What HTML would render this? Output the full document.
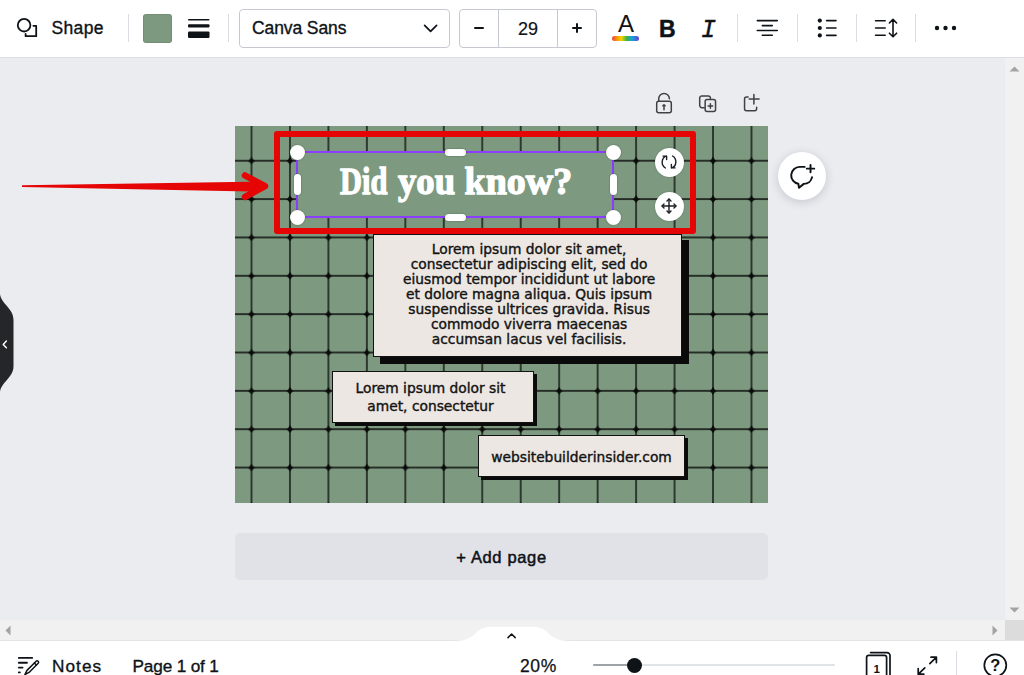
<!DOCTYPE html>
<html lang="en">
<head>
<meta charset="utf-8">
<title>Canva editor</title>
<style>
*{box-sizing:border-box;margin:0;padding:0}
html,body{width:1024px;height:675px;overflow:hidden;background:#ebecf0;font-family:"Liberation Sans",sans-serif;color:#0e1318}
.abs{position:absolute}
#toolbar{left:0;top:0;width:1024px;height:58px;background:#fff;border-bottom:1px solid #dcdfe3}
.ui{font-family:"Liberation Sans",sans-serif;color:#0e1318;white-space:nowrap;-webkit-text-stroke:0.35px #0e1318}
.vdiv{width:1px;background:#d9dce0;top:14px;height:28px}
.box{border:1px solid #c6cad0;border-radius:4px;background:#fff}
#stage{left:0;top:58px;width:1005px;height:562px;background:#ebecf0}
#vscroll{left:1005px;top:58px;width:19px;height:562px;background:#f1f1f2}
#hscroll{left:0;top:620px;width:1005px;height:21px;background:#f1f1f2}
#corner{left:1005px;top:620px;width:19px;height:21px;background:#dcdcdc}
#bottombar{left:0;top:640px;width:1024px;height:35px;background:#fff;border-top:1px solid #e3e4e8}
.tbox{-webkit-text-stroke:0.4px #141414;white-space:nowrap;background:#ece7e3;border:1px solid #111;color:#141414;text-align:center;font-family:"DejaVu Sans","Liberation Sans",sans-serif}
.hdl{background:#fff;box-shadow:0 0 2px rgba(0,0,0,.35)}
.tw{transform-origin:0 0;display:block}
</style>
</head>
<body>
<!-- STAGE -->
<div id="stage" class="abs"></div>
<div id="vscroll" class="abs"></div>
<div id="hscroll" class="abs"></div>
<div id="corner" class="abs"></div>

<!-- TOOLBAR -->
<div id="toolbar" class="abs">
<!-- shape icon -->
<svg class="abs" style="left:14px;top:14px" width="28" height="28" viewBox="0 0 28 28" fill="none" stroke="#0e1318" stroke-width="1.8" stroke-linecap="round" stroke-linejoin="round">
<circle cx="10.1" cy="11.2" r="6.3"/>
<path d="M22.2 11.8 V22.2 H11.6 M22.2 11.8 H19.4 M11.6 22.2 V20"/>
</svg>
<div class="abs ui" style="left:51.5px;top:17px;font-size:17.5px;letter-spacing:.35px;line-height:22px">Shape</div>
<div class="abs vdiv" style="left:128px"></div>
<div class="abs" style="left:143px;top:13.6px;width:29px;height:29px;border-radius:3px;background:#7d9a80;box-shadow:inset 0 0 0 1px rgba(0,0,0,.08)"></div>
<!-- line weight icon -->
<svg class="abs" style="left:186px;top:14.5px" width="26" height="28" viewBox="0 0 26 28">
<rect x="2" y="4" width="21.5" height="1.6" rx=".8" fill="#0e1318"/>
<rect x="2" y="9.2" width="21.5" height="3.2" rx="1" fill="#0e1318"/>
<rect x="2" y="16.4" width="21.5" height="6.6" rx="1.2" fill="#0e1318"/>
</svg>
<div class="abs vdiv" style="left:228px"></div>
<!-- font select -->
<div class="abs box" style="left:239px;top:9px;width:211px;height:39px"></div>
<div class="abs ui" style="left:252px;top:17px;font-size:17.5px;letter-spacing:-.1px;line-height:22px">Canva Sans</div>
<svg class="abs" style="left:420px;top:20px" width="20" height="16" viewBox="0 0 20 16" fill="none" stroke="#0e1318" stroke-width="1.7" stroke-linecap="round" stroke-linejoin="round"><path d="M4.6 5.4 L10.6 11.4 L16.6 5.4"/></svg>
<!-- size box -->
<div class="abs box" style="left:459px;top:9px;width:138px;height:39px"></div>
<div class="abs" style="left:498px;top:10px;width:1px;height:37px;background:#c6cad0"></div>
<div class="abs" style="left:557px;top:10px;width:1px;height:37px;background:#c6cad0"></div>
<div class="abs" style="left:474px;top:27.2px;width:9.5px;height:1.7px;background:#0e1318;border-radius:1px"></div>
<div class="abs ui" style="left:499px;top:17px;width:58px;text-align:center;font-size:18px;line-height:22px;top:18px;-webkit-text-stroke:0.2px #0e1318">29</div>
<div class="abs" style="left:572px;top:27.2px;width:10px;height:1.7px;background:#0e1318;border-radius:1px"></div>
<div class="abs" style="left:576.2px;top:23px;width:1.7px;height:10px;background:#0e1318;border-radius:1px"></div>
<!-- text colour -->
<div class="abs ui" style="left:611px;top:11.2px;width:30px;text-align:center;font-size:24px;line-height:26px;-webkit-text-stroke:0">A</div>
<div class="abs" style="left:612px;top:35.6px;width:27px;height:5px;border-radius:3px;background:linear-gradient(90deg,#f03e3e 0%,#f59f00 20%,#f5d400 35%,#37b24d 55%,#1c9fe0 75%,#6741d9 100%)"></div>
<!-- B I -->
<div class="abs" style="left:659px;top:15px;font-size:23px;line-height:28px;font-weight:700;color:#0e1318;-webkit-text-stroke:0.5px #0e1318">B</div>
<div class="abs" style="left:701px;top:17px;font-size:25px;line-height:28px;font-style:italic;font-family:'Liberation Mono',monospace;color:#0e1318;-webkit-text-stroke:.4px #0e1318">I</div>
<div class="abs vdiv" style="left:737px"></div>
<!-- align center -->
<svg class="abs" style="left:753px;top:14px" width="28" height="28" viewBox="0 0 28 28" stroke="#0e1318" stroke-width="1.6" stroke-linecap="round">
<path d="M4.3 6.6H24.3 M9.3 11.6H19.3 M4.3 16.5H24.3 M9.3 21.3H19.3"/>
</svg>
<div class="abs vdiv" style="left:797px"></div>
<!-- list -->
<svg class="abs" style="left:813px;top:14px" width="28" height="28" viewBox="0 0 28 28" stroke="#0e1318" stroke-width="1.6" stroke-linecap="round">
<circle cx="6.8" cy="6.6" r="2.1" fill="#0e1318" stroke="none"/><circle cx="6.8" cy="14" r="2.1" fill="#0e1318" stroke="none"/><circle cx="6.8" cy="21.4" r="2.1" fill="#0e1318" stroke="none"/>
<path d="M13.6 6.6H23 M13.6 14H23 M13.6 21.4H23"/>
</svg>
<div class="abs vdiv" style="left:856px"></div>
<!-- spacing -->
<svg class="abs" style="left:872px;top:14px" width="28" height="28" viewBox="0 0 28 28" fill="none" stroke="#0e1318" stroke-width="1.6" stroke-linecap="round" stroke-linejoin="round">
<path d="M3.6 6.8H13.2 M3.6 14H13.2 M3.6 21.2H13.2"/>
<path d="M21 5.6V22.6 M17.4 9 L21 5.4 L24.6 9 M17.4 19.2 L21 22.8 L24.6 19.2"/>
</svg>
<div class="abs vdiv" style="left:915px"></div>
<!-- more -->
<svg class="abs" style="left:931px;top:14px" width="28" height="28" viewBox="0 0 28 28" fill="#0e1318"><circle cx="6" cy="14" r="2.2"/><circle cx="14.5" cy="14" r="2.2"/><circle cx="23" cy="14" r="2.2"/></svg>
</div>

<!-- CANVAS -->
<div id="canvas" class="abs" style="left:235px;top:126px;width:533px;height:377px;overflow:hidden;background:#0a0a0a">
<svg class="abs" style="left:0;top:0" width="533" height="377" viewBox="0 0 533 377">
<defs>
<pattern id="grid" patternUnits="userSpaceOnUse" x="16.5" y="-3.6" width="38.46" height="38.35">
<rect x="0.68" y="0.68" width="37.1" height="36.99" rx="3.6" ry="3.6" fill="#7d9a80"/>
</pattern>
</defs>
<rect x="0" y="0" width="533" height="377" fill="#0a0a0a"/>
<rect x="0" y="0" width="533" height="377" fill="url(#grid)"/>
</svg>

<!-- selected shape (solid) -->
<div class="abs" style="left:62px;top:26px;width:316.4px;height:65px;background:#7d9a80"></div>
<div id="title" class="abs" style="left:62px;top:26px;width:317px;height:65px;font-family:'Liberation Serif',serif;font-weight:700;font-size:38px;line-height:44px;color:#fff;white-space:nowrap;-webkit-text-stroke:1.3px #fff">
<span class="abs tw" style="left:42.5px;top:6.5px;transform:scaleX(.80)">Did</span>
<span class="abs tw" style="left:100.5px;top:6.5px;transform:scaleX(.965)">you</span>
<span class="abs tw" style="left:167.5px;top:6.5px;transform:scaleX(1.0)">know?</span>
</div>
<!-- box 1 -->
<div class="abs" style="left:144.6px;top:114px;width:309px;height:123.6px;background:#0a0a0a"></div>
<div class="abs tbox" id="box1" style="left:137.6px;top:107.6px;width:309px;height:123.9px;font-size:13.8px;line-height:14.95px;padding-top:7.4px;padding-left:4px">Lorem ipsum dolor sit amet,<br>consectetur adipiscing elit, sed do<br>eiusmod tempor incididunt ut labore<br>et dolore magna aliqua. Quis ipsum<br>suspendisse ultrices gravida. Risus<br>commodo viverra maecenas<br>accumsan lacus vel facilisis.</div>
<!-- box 2 -->
<div class="abs" style="left:99.5px;top:247.5px;width:202px;height:52px;background:#0a0a0a"></div>
<div class="abs tbox" id="box2" style="left:97px;top:245px;width:202px;height:52px;font-size:13.8px;line-height:17.5px;padding-top:8px;padding-right:5px">Lorem ipsum dolor sit<br>amet, consectetur</div>
<!-- box 3 -->
<div class="abs" style="left:246px;top:312.4px;width:207px;height:41.6px;background:#0a0a0a"></div>
<div class="abs tbox" id="box3" style="left:243px;top:309.4px;width:207px;height:41.6px;font-size:13.8px;line-height:17px;padding-top:12.6px">websitebuilderinsider.com</div>
</div>

<!--OVERLAY-->
<!-- page action icons -->
<svg class="abs" style="left:652px;top:90px" width="24" height="24" viewBox="0 0 24 24" fill="none" stroke="#3d4247" stroke-width="1.5" stroke-linecap="round" stroke-linejoin="round">
<rect x="4.7" y="11.3" width="14.6" height="11.5" rx="2"/>
<path d="M6.7 11.3 V8.75 a5.35 5.35 0 0 1 10.7 0"/>
<path d="M12 19.8 V15 M10.9 15.8 L12 14.7 L13.1 15.8"/>
</svg>
<svg class="abs" style="left:696px;top:92px" width="24" height="24" viewBox="0 0 24 24" fill="none" stroke="#3d4247" stroke-width="1.5" stroke-linecap="round" stroke-linejoin="round">
<rect x="9.15" y="7.45" width="10.4" height="12.1" rx="2"/>
<path d="M14.4 6.4 V6 a2.1 2.1 0 0 0 -2.1 -2.1 H5.8 a2.1 2.1 0 0 0 -2.1 2.1 V13.6 a2.1 2.1 0 0 0 2.1 2.1 H8.2"/>
<path d="M14.4 11.7 V16.2 M12.1 13.95 H16.7"/>
</svg>
<svg class="abs" style="left:740px;top:90px" width="24" height="24" viewBox="0 0 24 24" fill="none" stroke="#3d4247" stroke-width="1.5" stroke-linecap="round" stroke-linejoin="round">
<path d="M8.1 7 H6.55 a2 2 0 0 0 -2 2 V18.65 a2 2 0 0 0 2 2 H14.6 a2 2 0 0 0 2 -2 V17.2"/>
<path d="M13.9 4.4 V13.9 M9.2 8.96 H19.1"/>
</svg>

<!-- red arrow -->
<svg class="abs" style="left:0;top:160px" width="290" height="52" viewBox="0 160 290 52">
<path d="M22 185.3 L22 187 L250 191.6 L262 186.3 L250 181.7 Z" fill="#e50505"/>
<path d="M245 175.5 L265 186.2 L245 196.8" fill="none" stroke="#e50505" stroke-width="6.5" stroke-linecap="round" stroke-linejoin="round"/>
</svg>
<!-- red highlight rect -->
<div class="abs" style="left:274px;top:131px;width:422px;height:103px;border:6.5px solid #e50505;border-radius:3px"></div>
<!-- selection -->
<div class="abs" style="left:296px;top:151px;width:318.4px;height:67px;border:2px solid #8b3dff"></div>
<div class="abs hdl" style="left:289.5px;top:144.5px;width:15px;height:15px;border-radius:50%"></div>
<div class="abs hdl" style="left:605.8px;top:144.5px;width:15px;height:15px;border-radius:50%"></div>
<div class="abs hdl" style="left:289.5px;top:209.5px;width:15px;height:15px;border-radius:50%"></div>
<div class="abs hdl" style="left:605.8px;top:209.5px;width:15px;height:15px;border-radius:50%"></div>
<div class="abs hdl" style="left:293.5px;top:174px;width:7px;height:21px;border-radius:3.5px"></div>
<div class="abs hdl" style="left:609.8px;top:174px;width:7px;height:21px;border-radius:3.5px"></div>
<div class="abs hdl" style="left:444.5px;top:148.5px;width:21px;height:7px;border-radius:3.5px"></div>
<div class="abs hdl" style="left:444.5px;top:213.5px;width:21px;height:7px;border-radius:3.5px"></div>
<!-- rotate / move -->
<div class="abs" style="left:654.8px;top:147.7px;width:29px;height:29px;border-radius:50%;background:#fff;box-shadow:0 0 2px rgba(0,0,0,.25)"></div>
<svg class="abs" style="left:659px;top:152px" width="20" height="20" viewBox="0 0 20 20" fill="none" stroke="#1a1d21" stroke-width="1.4" stroke-linecap="round" stroke-linejoin="round">
<path d="M6.4 16 A6.8 6.8 0 0 1 7.4 3.9 M4 4.1 H7.6 V7.6"/>
<path d="M13.6 4 A6.8 6.8 0 0 1 12.6 16.1 M16 15.9 H12.4 V12.4"/>
</svg>
<div class="abs" style="left:654.8px;top:191.7px;width:29px;height:29px;border-radius:50%;background:#fff;box-shadow:0 0 2px rgba(0,0,0,.25)"></div>
<svg class="abs" style="left:659px;top:196px" width="20" height="20" viewBox="0 0 20 20" fill="none" stroke="#1a1d21" stroke-width="1.4" stroke-linecap="round" stroke-linejoin="round">
<path d="M10 3.2 V16.8 M3.2 10 H16.8"/>
<path d="M8 5 L10 3 L12 5 M8 15 L10 17 L12 15 M5 8 L3 10 L5 12 M15 8 L17 10 L15 12"/>
</svg>
<!-- comment button -->
<div class="abs" style="left:778px;top:152px;width:48px;height:48px;border-radius:50%;background:#fff;box-shadow:0 2px 10px rgba(40,50,70,.2)"></div>
<svg class="abs" style="left:786.8px;top:160.6px" width="30.5" height="30.5" viewBox="0 0 28 28" fill="none" stroke="#0e1318" stroke-width="1.8" stroke-linecap="round" stroke-linejoin="round">
<path d="M16.2 5.4 H11.6 a7.8 7.8 0 0 0 -1.2 15.5 L11 24.6 L15.4 21 H15.6 a7.8 7.8 0 0 0 7.4 -6.2"/>
<path d="M21.6 3.6 V10.4 M18.2 7 H25"/>
</svg>
<!-- left panel toggle -->
<svg class="abs" style="left:0;top:294px" width="16" height="98" viewBox="0 0 16 98">
<path d="M0 0 C1 10 13.5 14 13.5 26 V72 C13.5 84 1 88 0 98 Z" fill="#252627"/>
<path d="M6.4 47 L3.2 50.4 L6.4 53.8" fill="none" stroke="#fff" stroke-width="1.4" stroke-linecap="round" stroke-linejoin="round"/>
</svg>
<!-- add page -->
<div class="abs" style="left:235px;top:533px;width:533px;height:47px;border-radius:5px;background:#e1e2e8"></div>
<div class="abs ui" style="left:235px;top:545px;width:533px;text-align:center;font-size:16.5px;line-height:24px;letter-spacing:.65px;-webkit-text-stroke:.5px #0e1318">+ Add page</div>
<!-- scroll arrows -->
<svg class="abs" style="left:1005px;top:61.5px" width="19" height="14" viewBox="0 0 19 14"><path d="M4.5 9.5 L14.5 9.5 L9.5 4.5 Z" fill="#a3a3a3"/></svg>
<svg class="abs" style="left:1005px;top:603px" width="19" height="14" viewBox="0 0 19 14"><path d="M4.5 4.5 L14.5 4.5 L9.5 9.5 Z" fill="#a3a3a3"/></svg>
<svg class="abs" style="left:0;top:620px" width="16" height="21" viewBox="0 0 16 21"><path d="M10.5 5.5 L10.5 15.5 L5.5 10.5 Z" fill="#a3a3a3"/></svg>
<svg class="abs" style="left:987px;top:620px" width="16" height="21" viewBox="0 0 16 21"><path d="M5.5 5.5 L5.5 15.5 L10.5 10.5 Z" fill="#a3a3a3"/></svg>


<!-- BOTTOM BAR -->
<div id="bottombar" class="abs"></div>
<!-- tab -->
<svg class="abs" style="left:450px;top:622px" width="124" height="22" viewBox="0 0 124 22">
<path d="M0 19.2 C14 19.2 20 17 26 11 C30 7 34 4.8 42 4.8 H82 C90 4.8 94 7 98 11 C104 17 110 19.2 124 19.2 V22 H0 Z" fill="#fff"/>
<path d="M58 15.6 L61.6 12 L65.2 15.6" fill="none" stroke="#0e1318" stroke-width="1.5" stroke-linecap="round" stroke-linejoin="round"/>
</svg>
<!-- notes -->
<svg class="abs" style="left:14px;top:653px" width="28" height="24" viewBox="0 0 28 24" fill="none" stroke="#0e1318" stroke-width="1.9" stroke-linecap="round" stroke-linejoin="round">
<path d="M4.85 4.9 H18.15 M4.85 9.75 H12.95 M4.85 14.6 H8.55 M4.85 19.4 H5.85"/>
<g transform="translate(10.9 21.5) rotate(45) translate(0 -18.8)" stroke-width="1.5">
<path d="M-1.45 1.45 a1.45 1.45 0 0 1 2.9 0 V14.4 L0 18.8 L-1.45 14.4 Z" fill="#fff"/>
<path d="M-1.45 4 H1.45"/>
</g>
</svg>
<div class="abs ui" style="left:52px;top:655.2px;font-size:17.2px;letter-spacing:1.05px;line-height:22px">Notes</div>
<div class="abs ui" style="left:132.5px;top:655.2px;font-size:17.2px;letter-spacing:-.15px;line-height:22px">Page 1 of 1</div>
<div class="abs ui" style="left:520px;top:655px;font-size:17.5px;letter-spacing:.6px;line-height:22px;-webkit-text-stroke:.25px #0e1318">20%</div>
<!-- slider -->
<div class="abs" style="left:593px;top:664.2px;width:242px;height:2px;border-radius:1px;background:#e1e4e7"></div>
<div class="abs" style="left:593px;top:664.2px;width:38px;height:2px;border-radius:1px;background:#9ea3a8"></div>
<div class="abs" style="left:626.7px;top:657.7px;width:15px;height:15px;border-radius:50%;background:#0e1318"></div>
<!-- pages icon -->
<svg class="abs" style="left:862px;top:648px" width="34" height="30" viewBox="0 0 34 30" fill="none" stroke="#0e1318" stroke-width="1.7" stroke-linecap="round" stroke-linejoin="round">
<rect x="4.6" y="7.4" width="20" height="24" rx="2.2"/>
<path d="M8.6 4.6 H25 a3 3 0 0 1 3 3 V30"/>
</svg>
<div class="abs ui" style="left:866.6px;top:662.5px;width:20px;text-align:center;font-size:11.5px;line-height:13px;font-weight:700;-webkit-text-stroke:0">1</div>
<!-- fullscreen -->
<svg class="abs" style="left:914px;top:652px" width="28" height="26" viewBox="0 0 28 26" fill="none" stroke="#0e1318" stroke-width="1.7" stroke-linecap="round" stroke-linejoin="round">
<path d="M15.8 11.6 L22 5.6 M17 5.2 H22.4 V10.6"/>
<path d="M10.8 15.8 L4.6 21.8 M4.2 16.6 V22.2 H9.8"/>
</svg>
<div class="abs" style="left:956px;top:651px;width:1px;height:24px;background:#d9dce0"></div>
<!-- help -->
<svg class="abs" style="left:981px;top:651px" width="28" height="28" viewBox="0 0 28 28" fill="none" stroke="#0e1318" stroke-width="1.7" stroke-linecap="round" stroke-linejoin="round"><circle cx="14.3" cy="14.3" r="11"/></svg>
<div class="abs ui" style="left:985.3px;top:655px;width:20px;text-align:center;font-size:16.5px;line-height:20px;font-weight:700;-webkit-text-stroke:0">?</div>

</body>
</html>
